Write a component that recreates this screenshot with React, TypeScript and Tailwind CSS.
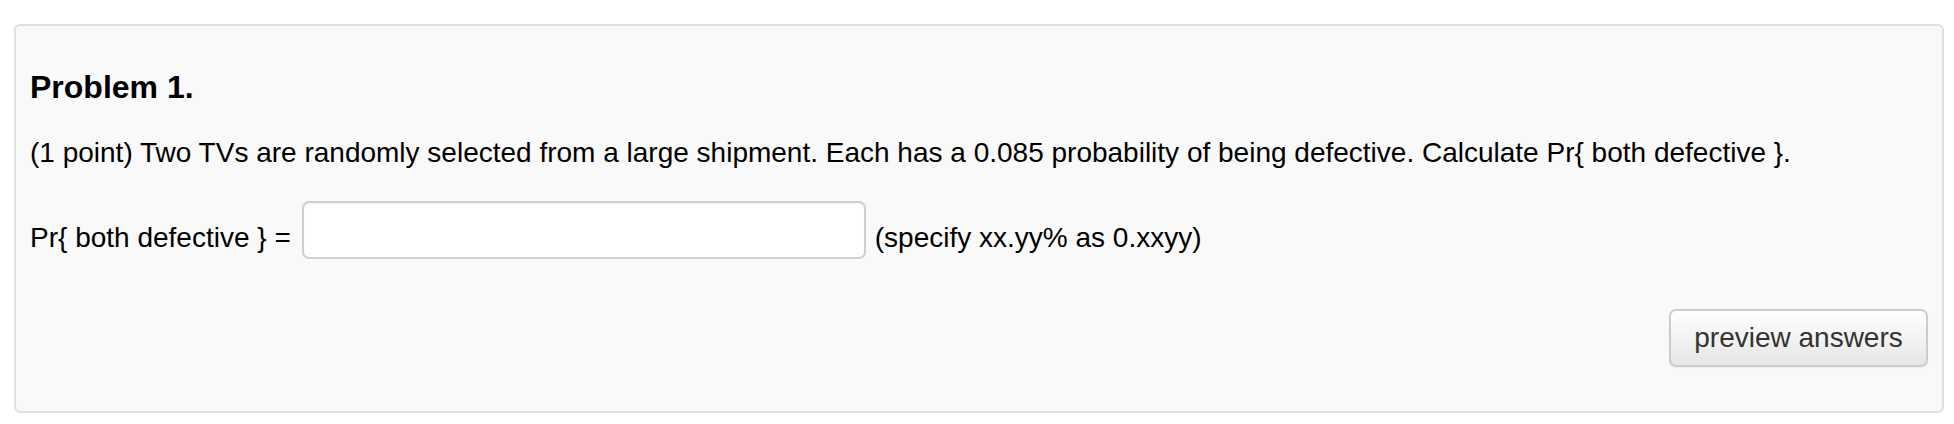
export default function App() {
  return (
    <div className="min-h-screen bg-white pt-[24px] pl-[14px] font-['Liberation_Sans',Arial,sans-serif] text-black">
      {/* Problem card */}
      <div className="w-[1930px] h-[389px] rounded-[6px] border-2 border-[#e0e0e0] bg-[#f9f9f9] pl-[14px] pr-[14px] pt-[43px]">
        <h3 className="text-[32px] leading-[36px] font-bold">Problem 1.</h3>

        <p className="mt-[32px] text-[28px] leading-[32px]">
          (1 point) Two TVs are randomly selected from a large shipment. Each has a 0.085 probability of being defective.
          Calculate Pr{'{'} both defective {'}'}.
        </p>

        <div className="mt-[32px] flex items-end">
          <span className="mb-[5px] text-[28px] leading-[32px]">Pr{'{'} both defective {'}'} =</span>
          <input
            type="text"
            className="ml-[11px] h-[58px] w-[564px] rounded-[7px] border-2 border-[#cfcfcf] bg-white px-3 text-[28px] shadow-[inset_0_1px_2px_rgba(0,0,0,0.06)] outline-none"
          />
          <span className="mb-[5px] ml-[9px] text-[28px] leading-[32px]">(specify xx.yy% as 0.xxyy)</span>
        </div>

        <div className="mt-[50px] flex justify-end">
          <button className="h-[58px] w-[259px] rounded-[7px] border-2 border-[#cccccc] bg-gradient-to-b from-white to-[#e6e6e6] text-[28px] text-[#333333] shadow-[0_1px_2px_rgba(0,0,0,0.05)]">
            preview answers
          </button>
        </div>
      </div>
    </div>
  );
}
